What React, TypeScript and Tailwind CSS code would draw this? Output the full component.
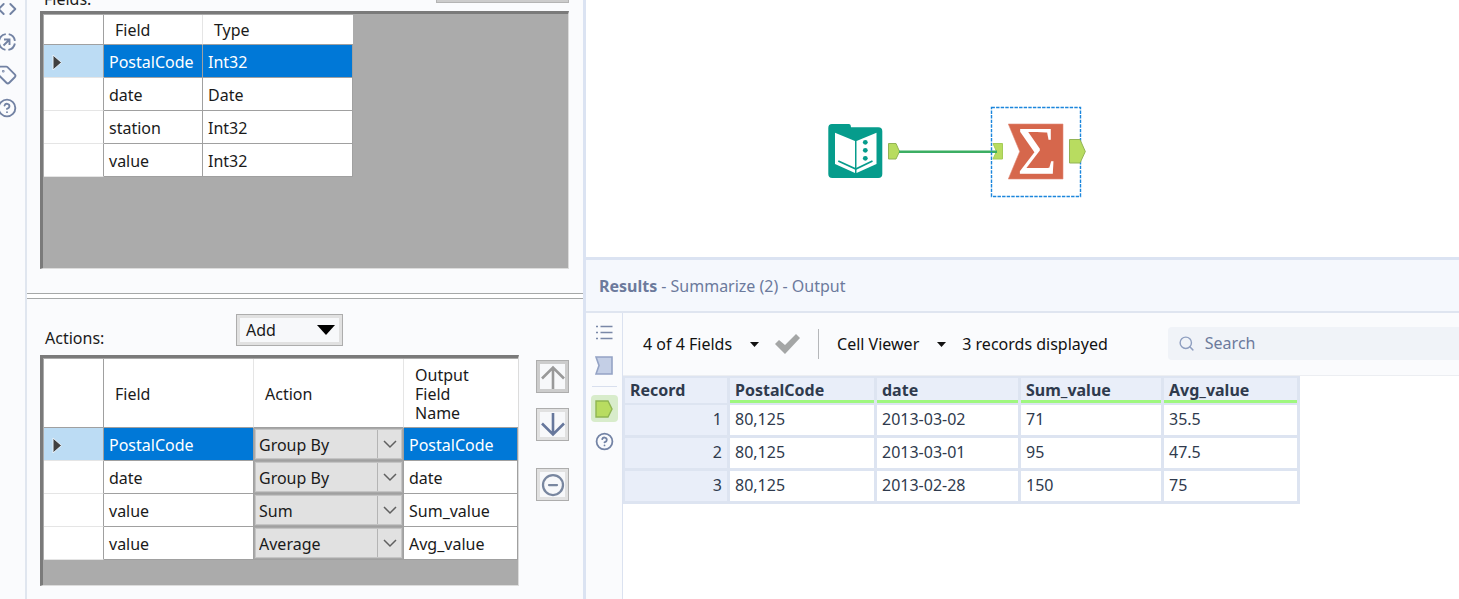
import type { ReactNode } from "react";
import { CircleHelp, CircleMinus, Code, Search, Tag } from "lucide-react";

const fields = [
  { name: "PostalCode", type: "Int32" },
  { name: "date", type: "Date" },
  { name: "station", type: "Int32" },
  { name: "value", type: "Int32" },
];

const actions = [
  { field: "PostalCode", action: "Group By", output: "PostalCode" },
  { field: "date", action: "Group By", output: "date" },
  { field: "value", action: "Sum", output: "Sum_value" },
  { field: "value", action: "Average", output: "Avg_value" },
];

const records = [
  ["80,125", "2013-03-02", "71", "35.5"],
  ["80,125", "2013-03-01", "95", "47.5"],
  ["80,125", "2013-02-28", "150", "75"],
];

const gridFrame =
  "border-t-[3px] border-l-[3px] border-r border-b border-t-[#7a7a7a] border-l-[#7a7a7a] border-r-[#dcdcdc] border-b-[#dcdcdc] bg-[#ababab] pt-px pl-px";
const headCell = "border-b border-b-[#a0a0a0] bg-white px-[11px] pt-0.5 text-left font-normal leading-[19px]";
const bodyCell = "border-r border-b border-[#a0a0a0] px-[5px] pt-px leading-5";
const portFill = "#b8dc60";
const portStroke = "#93b455";

function RowMarker({ active }: { active: boolean }) {
  return (
    <td
      className={`h-[33px] border-r border-b border-r-[#a0a0a0] border-b-[#e5e5e5] pt-0.5 pl-2 ${
        active ? "bg-[#bcdcf4]" : "bg-white"
      }`}
    >
      {active && (
        <svg width="11" height="17" viewBox="0 0 11 17" className="block">
          <path d="M1 1v15L9.500 8.500z" fill="#404040" stroke="#e9f3fb" strokeWidth="1" />
        </svg>
      )}
    </td>
  );
}

function FieldsGrid() {
  return (
    <div className={`h-[258px] ${gridFrame}`}>
      <table className="w-[309px] table-fixed border-separate border-spacing-0">
        <colgroup>
          <col className="w-[60px]" />
          <col className="w-[99px]" />
          <col className="w-[150px]" />
        </colgroup>
        <thead>
          <tr className="h-[30px]">
            <th className={`${headCell} border-r border-r-[#a0a0a0]`} />
            <th className={`${headCell} border-r border-r-[#e5e5e5]`}>Field</th>
            <th className={headCell}>Type</th>
          </tr>
        </thead>
        <tbody>
          {fields.map((field, i) => (
            <tr key={field.name} className={i === 0 ? "bg-[#0078d7] text-white" : "bg-white"}>
              <RowMarker active={i === 0} />
              <td className={bodyCell}>{field.name}</td>
              <td className={bodyCell}>{field.type}</td>
            </tr>
          ))}
        </tbody>
      </table>
    </div>
  );
}

function ActionsGrid() {
  return (
    <div className={`h-[231px] w-[479px] ${gridFrame}`}>
      <table className="w-full table-fixed border-separate border-spacing-0">
        <colgroup>
          <col className="w-[60px]" />
          <col className="w-[150px]" />
          <col className="w-[150px]" />
          <col />
        </colgroup>
        <thead>
          <tr className="h-[69px]">
            <th className={`${headCell} border-r border-r-[#a0a0a0]`} />
            <th className={`${headCell} border-r border-r-[#e5e5e5]`}>Field</th>
            <th className={`${headCell} border-r border-r-[#e5e5e5]`}>Action</th>
            <th className={headCell}>
              Output
              <br />
              Field
              <br />
              Name
            </th>
          </tr>
        </thead>
        <tbody>
          {actions.map((row, i) => (
            <tr key={row.output} className={i === 0 ? "bg-[#0078d7] text-white" : "bg-white"}>
              <RowMarker active={i === 0} />
              <td className={bodyCell}>{row.field}</td>
              <td className="border-r border-b border-[#a0a0a0] bg-[#a8a8a8] p-px text-[#1a1a1a]">
                <div className="relative h-[30px] border border-[#c4c4c4] bg-[#e1e1e1]">
                  <select
                    aria-label={`Action for ${row.output}`}
                    defaultValue={row.action}
                    className="h-full w-full appearance-none px-[3px] pt-px"
                  >
                    <option>Group By</option>
                    <option>Sum</option>
                    <option>Average</option>
                  </select>
                  <span className="pointer-events-none absolute inset-y-0 right-0 flex w-6 items-center justify-center border-l border-[#b4b4b4]">
                    <svg width="14" height="9" viewBox="0 0 14 9" fill="none" stroke="#606060" strokeWidth="1.500">
                      <path d="M1 1l6 6 6-6" />
                    </svg>
                  </span>
                </div>
              </td>
              <td className={bodyCell}>{row.output}</td>
            </tr>
          ))}
        </tbody>
      </table>
    </div>
  );
}

function SquareButton({
  label,
  disabled,
  children,
}: {
  label: string;
  disabled?: boolean;
  children: ReactNode;
}) {
  return (
    <button
      type="button"
      aria-label={label}
      disabled={disabled}
      className="flex size-[33px] items-center justify-center border border-[#adadad] bg-[#e1e1e1] p-[3px] disabled:bg-[#cccccc]"
    >
      <span className="flex size-full items-center justify-center bg-[#f7f8fa]">{children}</span>
    </button>
  );
}

function Arrow({ up }: { up?: boolean }) {
  return (
    <svg
      width="24"
      height="24"
      viewBox="0 0 24 24"
      fill="none"
      stroke={up ? "#999" : "#66779c"}
      strokeWidth="2.600"
      className="shrink-0"
    >
      <path d={up ? "M12 24V2M1 13.500L12 2.500l11 11" : "M12 0v22M1 10.500l11 11 11-11"} />
    </svg>
  );
}

function ConfigPanel() {
  return (
    <section className="w-[556px] shrink-0 overflow-hidden text-[#1a1a1a]">
      <div className="-mt-[19px] flex h-[22px] justify-between pr-3.5 pl-[17px]">
        <span className="leading-9">Fields:</span>
        <button type="button" aria-label="Select" className="h-[22px] w-[133px] border border-[#b4b4b4] bg-[#cccccc]" />
      </div>
      <div className="pt-2 pr-3.5 pb-6 pl-[13px]">
        <FieldsGrid />
      </div>
      <div className="h-1.5 border-y border-[#a5a8a8] bg-white" />
      <div className="flex items-start pt-[15px] pl-[18px]">
        <span className="w-[191px] pt-3.5 leading-5">Actions:</span>
        <button
          type="button"
          className="flex h-8 w-[107px] items-center justify-between border border-[#adadad] bg-[#e1e1e1] p-[3px]"
        >
          <span className="flex h-full w-full items-center justify-between bg-[#f7f8fa] pr-1 pl-1.5">
            Add
            <svg width="18" height="10" viewBox="0 0 18 10">
              <path d="M0 0h18L9 10z" fill="#000" />
            </svg>
          </span>
        </button>
      </div>
      <div className="flex justify-between pt-[7px] pr-3.5 pl-[13px]">
        <ActionsGrid />
        <div className="flex flex-col pt-[5px]">
          <SquareButton label="Move up" disabled>
            <Arrow up />
          </SquareButton>
          <div className="mt-[15px] mb-[27px]">
            <SquareButton label="Move down">
              <Arrow />
            </SquareButton>
          </div>
          <SquareButton label="Remove">
            <CircleMinus size={24} strokeWidth={2.25} className="shrink-0 text-[#78869f]" />
          </SquareButton>
        </div>
      </div>
    </section>
  );
}

function Workflow() {
  return (
    <div className="relative h-[257px] shrink-0 bg-white">
      <svg className="absolute top-[104px] left-[238px]" width="266" height="96" viewBox="824 104 266 96">
        <path
          d="M832 124h17q1.500 0 1.700 1.500l.3 1.800h27.300q4 0 4 4V174q0 4-4 4H832.300q-4 0-4-4V128q0-4 3.700-4z"
          fill="#069c8c"
        />
        <path d="M835 132.700l20 8.300v32l-20-9z" fill="#fff" />
        <path d="M876.500 132.700l-20 8.300v32l20-9z" fill="#fff" />
        <path d="M838.300 161l17.500 8 16.700-8" fill="none" stroke="#069c8c" strokeWidth="1.800" />
        <circle cx="865.300" cy="142.300" r="2.400" fill="#069c8c" />
        <circle cx="865.300" cy="150.300" r="2.400" fill="#069c8c" />
        <circle cx="865.300" cy="158.300" r="2.400" fill="#069c8c" />
        <path d="M888.500 143.500h7.500l3.500 8-3.500 7.500h-7.500z" fill={portFill} stroke={portStroke} />
        <path d="M993 143.500h9.500V159H993l3.500-7.500z" fill={portFill} stroke="#a5cc58" />
        <path d="M899 151.700h98" stroke="#3cae63" strokeWidth="2.600" />
        <rect
          x="991.500"
          y="107.500"
          width="89"
          height="89"
          fill="none"
          stroke="#1c86dc"
          strokeWidth="1.400"
          strokeDasharray="3.400 1.200"
        />
        <path d="M1008.300 124h54.700v55h-54.700l11.400-27.500z" fill="#d6674c" stroke="#e28c78" strokeWidth=".6" />
        <text x="1037" y="173" textAnchor="middle" fill="#fff" fontFamily="Liberation Serif, serif" fontSize="68">
          Σ
        </text>
        <path d="M1069.500 139.500h10.500l5.300 12-5.300 11.500h-10.500z" fill={portFill} stroke={portStroke} />
      </svg>
    </div>
  );
}

function Caret() {
  return (
    <svg width="9" height="5" viewBox="0 0 9 5">
      <path d="M0 0h9L4.500 5z" fill="#111" />
    </svg>
  );
}

function ResultsRail() {
  return (
    <nav className="flex w-[37px] shrink-0 flex-col items-center border-r border-[#dbe2f0] pt-3">
      <button type="button" aria-label="Messages">
        <svg width="17" height="15" viewBox="0 0 17 15" className="block" stroke="#7a88a8" strokeWidth="1.600">
          <path d="M0 1.500h2M0 7.500h2M0 13.500h2M4.500 1.500h12M4.500 7.500h12M4.500 13.500h12" />
        </svg>
      </button>
      <button type="button" aria-label="Input" className="mt-4">
        <svg width="18" height="19" viewBox="0 0 18 19" className="block">
          <path d="M1 1h16v17H1l3-8.500z" fill="#c4cfe6" stroke="#94a3c5" strokeWidth="1.600" />
        </svg>
      </button>
      <div className="mt-[11px] h-px w-[25px] bg-[#d8dfee]" />
      <button
        type="button"
        aria-label="Output"
        className="mt-2 flex size-[27px] items-center justify-center rounded bg-[#d8eccb]"
      >
        <svg width="18" height="18" viewBox="0 0 18 18">
          <path d="M1 1h12l4 8-4 8H1z" fill="#b8dc60" stroke="#8fb552" strokeWidth="1.400" />
        </svg>
      </button>
      <button type="button" aria-label="Help" className="mt-2.5">
        <CircleHelp size={19} strokeWidth={2.25} className="text-[#7383a5]" />
      </button>
    </nav>
  );
}

function ResultsTable() {
  const th = "border-r-[3px] border-b-2 border-[#dde4f1] bg-[#e9eef9] px-[5px] text-left align-top font-bold leading-6";
  const td = "border-r-[3px] border-b-[3px] border-[#dde4f1] px-[5px] align-top leading-7";
  return (
    <table className="w-[677px] table-fixed border-separate border-spacing-0 border-t-2 border-l-2 border-[#dde4f1] text-[#2f3a4d]">
      <colgroup>
        <col className="w-[105px]" />
        <col className="w-[147px]" />
        <col className="w-[144px]" />
        <col className="w-[143px]" />
        <col />
      </colgroup>
      <thead>
        <tr className="h-[27px]">
          <th className={th}>Record</th>
          {["PostalCode", "date", "Sum_value", "Avg_value"].map((name) => (
            <th key={name} className={`${th} shadow-[inset_0_-3px_0_#9ff77f]`}>
              {name}
            </th>
          ))}
        </tr>
      </thead>
      <tbody>
        {records.map((row, i) => (
          <tr key={row[1]} className="h-[33px]">
            <td className={`${td} bg-[#e9eef9] text-right`}>{i + 1}</td>
            {row.map((value, j) => (
              <td key={j} className={td}>
                {value}
              </td>
            ))}
          </tr>
        ))}
      </tbody>
    </table>
  );
}

function Results() {
  return (
    <section className="flex min-h-0 flex-1 flex-col border-t-[3px] border-[#dbe3f2]">
      <h2 className="flex h-[53px] shrink-0 items-center border-b-2 border-[#dfe5f0] bg-[#f5f8fd] pl-[13px] text-[#6c7a9c]">
        <b>Results</b>
        <span className="ml-1">- Summarize (2) - Output</span>
      </h2>
      <div className="flex min-h-0 flex-1">
        <ResultsRail />
        <div className="min-w-0 flex-1 bg-white">
          <div className="flex h-[63px] items-center border-b border-[#eceef2] bg-[#fafbfd] pl-5 whitespace-nowrap text-[#111]">
            <button type="button" className="flex items-center gap-[18px]">
              4 of 4 Fields <Caret />
            </button>
            <button type="button" aria-label="Apply" className="ml-4">
              <svg width="25" height="20" viewBox="0 0 25 20" className="block">
                <path d="M0 10l4-4 6 5L21 0l4 4-15 16z" fill="#a4a6a6" />
              </svg>
            </button>
            <div className="mx-[18px] h-[30px] w-px bg-[#b5b7ba]" />
            <button type="button" className="flex items-center gap-[18px]">
              Cell Viewer <Caret />
            </button>
            <span className="ml-4">3 records displayed</span>
            <label className="mb-0.5 ml-[60px] flex h-[33px] min-w-0 flex-1 items-center gap-2.5 rounded-l bg-[#f0f3f8] pl-2.5">
              <Search size={17} strokeWidth={2} className="shrink-0 text-[#8f9fc0]" />
              <input
                type="text"
                aria-label="Search"
                placeholder="Search"
                className="min-w-0 flex-1 placeholder:text-[#6c7a9c] placeholder:opacity-100"
              />
            </label>
          </div>
          <ResultsTable />
        </div>
      </div>
    </section>
  );
}

export default function App() {
  return (
    <div className="flex h-screen overflow-hidden bg-[#fafbfd] font-['Noto_Sans','Segoe_UI',sans-serif] text-base">
      <nav className="flex w-[27px] shrink-0 flex-col gap-[13px] overflow-hidden border-r-2 border-[#e0e6ef] text-[#7282a3]">
        <button type="button" aria-label="XML" className="-mt-px -ml-[3px]">
          <Code size={20} strokeWidth={2.25} />
        </button>
        <button type="button" aria-label="Navigation" className="-ml-[3px]">
          <svg width="20" height="20" viewBox="0 0 20 20" fill="none" stroke="currentColor" strokeWidth="1.900">
            <circle cx="10" cy="10" r="8" strokeDasharray="9.570 3" strokeDashoffset="-1.500" />
            <path d="M6.500 13.500l6-6M7 7.500h5.500v5.500" />
          </svg>
        </button>
        <button type="button" aria-label="Annotation" className="-ml-[3px]">
          <Tag size={20} strokeWidth={2.25} />
        </button>
        <button type="button" aria-label="Help" className="-ml-[3px]">
          <CircleHelp size={20} strokeWidth={2.25} />
        </button>
      </nav>
      <ConfigPanel />
      <main className="flex min-w-0 flex-1 flex-col border-l-[3px] border-[#dbe3f2]">
        <Workflow />
        <Results />
      </main>
    </div>
  );
}
